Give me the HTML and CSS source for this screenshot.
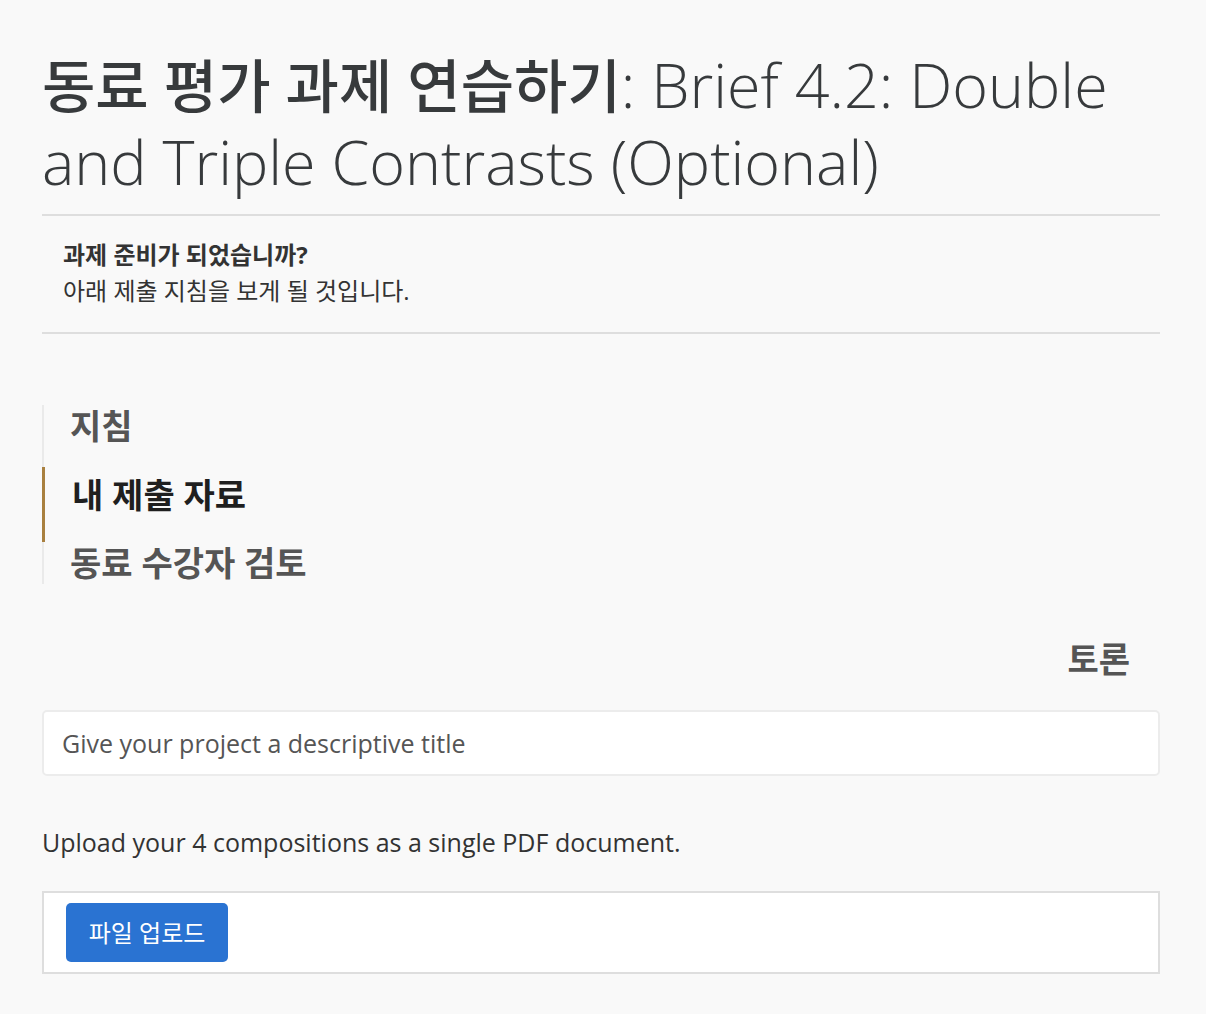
FILE: index.html
```html
<!doctype html>
<html>
<head>
	<title>동료 평가 과제 연습하기</title>
	<meta charset="utf-8">
	<link rel="stylesheet" href="styles.css">
</head>

<body>
	<div class="page">
		<h1 class="page-title"><span class="title-ko">동료 평가 과제 연습하기</span>: Brief 4.2: Double and Triple Contrasts (Optional)</h1>

		<div class="ready">
			<p class="ready-q">과제 준비가 되었습니까?</p>
			<p class="ready-a">아래 제출 지침을 보게 될 것입니다.</p>
		</div>

		<ul class="tabs">
			<li class="tab tab-first">지침</li>
			<li class="tab tab-active">내 제출 자료</li>
			<li class="tab tab-last">동료 수강자 검토</li>
		</ul>

		<div class="discuss">토론</div>

		<input class="title-input" type="text" placeholder="Give your project a descriptive title">

		<p class="upload-note">Upload your 4 compositions as a single PDF document.</p>

		<div class="upload-box">
			<a href="javascript:void(0)" class="btn-upload">파일 업로드</a>
		</div>
	</div>
</body>
</html>
```

FILE: styles.css
```css
body, ul, li, p, h1 {
	padding: 0;
	margin: 0;
}
body {
	background: #f9f9f9;
	color: #333;
	font-family: "Open Sans", "Noto Sans CJK KR", sans-serif;
}
ul {
	list-style: none;
}
.page {
	width: 1118px;
	margin: 0 0 0 42px;
	padding-top: 47px;
}

.page-title {
	font-size: 61px;
	font-weight: 300;
	line-height: 76px;
	color: #373a3c;
	padding-bottom: 14px;
	border-bottom: 2px solid #dedede;
}
.title-ko {
	font-size: 58px;
	font-weight: 500;
}

.ready {
	padding: 21px 21px 23px;
	border-bottom: 2px solid #dedede;
}
.ready-q {
	font-size: 24px;
	font-weight: 700;
	line-height: 36px;
	color: #333;
}
.ready-a {
	font-size: 24px;
	line-height: 36px;
	color: #333;
}

.tabs {
	margin-top: 71px;
	border-left: 2px solid #eaeaea;
}
.tab {
	font-size: 34px;
	font-weight: 700;
	line-height: 42px;
	color: #555;
	padding-left: 26px;
}
.tab-first {
	height: 62px;
}
.tab-last {
	height: 42px;
}
.tab-active {
	color: #1f1f1f;
	height: 68px;
	margin-left: -2px;
	padding-top: 7px;
	padding-left: 27px;
	border-left: 3px solid #a9803f;
}

.discuss {
	text-align: right;
	font-size: 34px;
	font-weight: 700;
	color: #555;
	line-height: 42px;
	padding-right: 30px;
	margin-top: 54px;
}

.title-input {
	display: block;
	box-sizing: border-box;
	width: 100%;
	height: 66px;
	margin-top: 30px;
	padding: 0 18px;
	border: 2px solid #ececec;
	border-radius: 5px;
	background: #fff;
	font-family: "Open Sans", sans-serif;
	font-size: 25px;
	color: #555;
	outline: none;
}
.title-input::placeholder {
	color: #555;
}

.upload-note {
	font-size: 25px;
	line-height: 34px;
	color: #333;
	margin-top: 49px;
}

.upload-box {
	margin-top: 32px;
	box-sizing: border-box;
	height: 83px;
	padding: 10px 22px;
	border: 2px solid #dedede;
	background: #fff;
}
.btn-upload {
	display: inline-block;
	width: 162px;
	height: 59px;
	line-height: 59px;
	text-align: center;
	font-size: 24px;
	color: #fff;
	text-decoration: none;
	background: #2a73d2;
	border-radius: 5px;
}
```
